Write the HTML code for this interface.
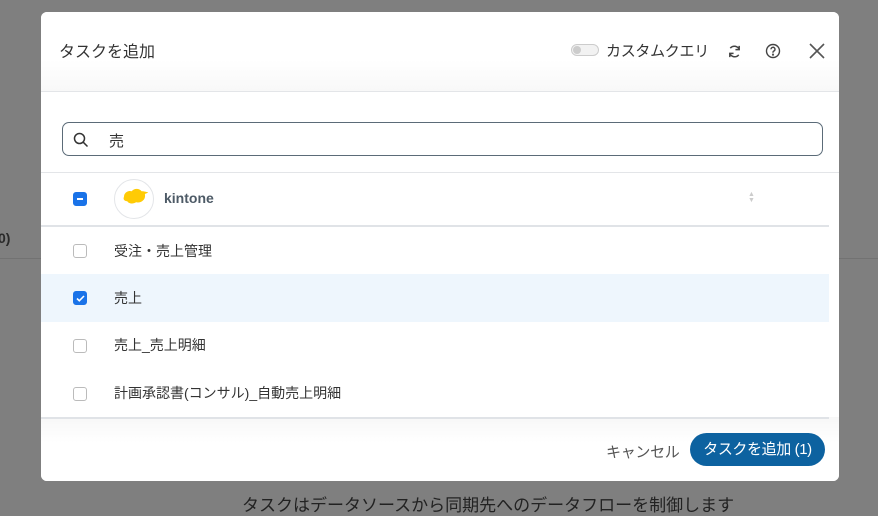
<!DOCTYPE html>
<html><head><meta charset="utf-8"><style>
*{box-sizing:border-box;margin:0;padding:0}
body{width:878px;height:503px;overflow:hidden;background:#7f7f7f;font-family:"Liberation Sans","Noto Sans CJK JP",sans-serif;position:relative}
.bgline{position:absolute;left:0;right:0;top:258px;height:1px;background:#727272}
.bg0{position:absolute;left:-2px;top:230px;font-size:14px;font-weight:bold;color:#2a2a2a}
.bgtxt{position:absolute;left:242px;top:491px;font-size:17px;color:#222}
.modal{position:absolute;left:41px;top:12px;width:798px;height:469px;background:#fff;border-radius:6px;overflow:hidden}
.title{position:absolute;left:18px;top:26px;font-size:16px;color:#333}
.hdr{position:absolute;left:0;top:0;width:100%;height:80px;background:linear-gradient(#fff 60%,#f8f8f8)}
.hline{position:absolute;left:0;right:0;top:79px;height:1px;background:#e3e5e8}
.tog{position:absolute;left:530px;top:32px;width:28px;height:12px;border:1px solid #ccc;border-radius:7px;background:#f2f2f2}
.tog:after{content:"";position:absolute;left:1px;top:1px;width:8px;height:8px;border-radius:50%;background:#ccc}
.cq{position:absolute;left:565px;top:28px;font-size:15px;color:#333;letter-spacing:-0.3px}
.search{position:absolute;left:21px;top:110px;width:761px;height:34px;border:1px solid #5b6b78;border-radius:7px}
.search .q{position:absolute;left:46px;top:7px;font-size:15px;color:#333}
.sline{position:absolute;left:0;right:0;top:160px;height:1px;background:#e3e5e8}
.row{position:absolute;left:0;width:788px;height:48px}
.cb{position:absolute;left:32px;width:14px;height:14px;border:1px solid #bbb;border-radius:3px;background:#fff}
.cb.on{background:#1a73e8;border-color:#1a73e8}
.lbl{position:absolute;left:73px;font-size:14px;color:#333}
.foot{position:absolute;left:0;right:0;top:405px;height:64px;background:linear-gradient(#f7f7f7,#fff 40%)}
.btn{position:absolute;left:649px;top:421px;width:135px;height:33px;border-radius:17px;background:#0d62a0;color:#fff;font-size:15px;text-align:center;line-height:33px;letter-spacing:-0.4px}
.cancel{position:absolute;left:565px;top:429px;font-size:15px;color:#555;letter-spacing:-0.3px}
</style></head><body>
<div class="bgline"></div>
<div class="bg0">0)</div>
<div class="bgtxt">タスクはデータソースから同期先へのデータフローを制御します</div>
<div class="modal">
<div class="hdr"></div>
<div class="title">タスクを追加</div>
<div class="tog"></div>
<div class="cq">カスタムクエリ</div>
<svg style="position:absolute;left:686px;top:32px" width="15" height="15" viewBox="0 0 16 16" fill="none" stroke="#444" stroke-width="1.6"><path d="M13 6A5.5 5.5 0 0 0 3.5 4.5M3 10a5.5 5.5 0 0 0 9.5 1.5"/><path d="M13 2v4H9M3 14v-4h4"/></svg>
<svg style="position:absolute;left:724px;top:31px" width="16" height="16" viewBox="0 0 16 16" fill="none" stroke="#444" stroke-width="1.4"><circle cx="8" cy="8" r="6.5"/><path d="M6 6.3a2 2 0 1 1 2.5 1.9c-.4.2-.5.5-.5 1v.6"/><circle cx="8" cy="11.6" r=".4" fill="#444"/></svg>
<svg style="position:absolute;left:768px;top:31px" width="16" height="16" viewBox="0 0 16 16" stroke="#555" stroke-width="1.6"><path d="M1 1L15 15M15 1L1 15"/></svg>
<div class="hline"></div>
<div class="search"><svg style="position:absolute;left:10px;top:9px" width="16" height="16" viewBox="0 0 16 16" fill="none" stroke="#333" stroke-width="1.5"><circle cx="6.5" cy="6.5" r="5"/><path d="M10.2 10.2L14.5 14.5"/></svg><span class="q">売</span></div>
<div class="sline"></div>
<div class="row" style="top:161px;height:53px">
<div class="cb on" style="top:19px"><div style="position:absolute;left:3px;top:5px;width:6px;height:2px;background:#fff"></div></div>
<div style="position:absolute;left:73px;top:6px;width:40px;height:40px;border:1px solid #e3e5e8;border-radius:50%"><svg style="position:absolute;left:5px;top:8px" width="30" height="22" viewBox="0 0 26 20"><path d="M3 8c0-4 4-6 7-5 2-3 7-3 9 0 3 0 5 1 6 1-1 1-3 1-3 2 1 4-3 8-8 7-3 2-7 1-8-1-3 0-4-2-3-4z" fill="#ffcb05"/></svg></div>
<div style="position:absolute;left:123px;top:17px;font-size:14px;font-weight:bold;color:#4d5a66">kintone</div>
<div style="position:absolute;left:707px;top:19px;font-size:7px;color:#ccc;line-height:6px">▲<br>▼</div>
</div>
<div style="position:absolute;left:0;width:788px;top:213px;height:2px;background:#e0e3e7"></div>
<div class="row" style="top:215px"><div class="cb" style="top:17px"></div><div class="lbl" style="top:14px">受注・売上管理</div></div>
<div class="row" style="top:262px;background:#eef6fd"><div class="cb on" style="top:17px"><svg style="position:absolute;left:2px;top:2px" width="9" height="9" viewBox="0 0 9 9" fill="none" stroke="#fff" stroke-width="1.6"><path d="M1 4.5l2.3 2.3L8 2"/></svg></div><div class="lbl" style="top:14px">売上</div></div>
<div class="row" style="top:310px"><div class="cb" style="top:17px"></div><div class="lbl" style="top:13px">売上_売上明細</div></div>
<div class="row" style="top:358px"><div class="cb" style="top:17px"></div><div class="lbl" style="top:13px">計画承認書(コンサル)_自動売上明細</div></div>
<div class="foot"></div>
<div style="position:absolute;left:0;width:788px;top:405px;height:2px;background:#e0e3e7"></div>
<div class="cancel">キャンセル</div>
<div class="btn">タスクを追加 (1)</div>
</div>
</body></html>
